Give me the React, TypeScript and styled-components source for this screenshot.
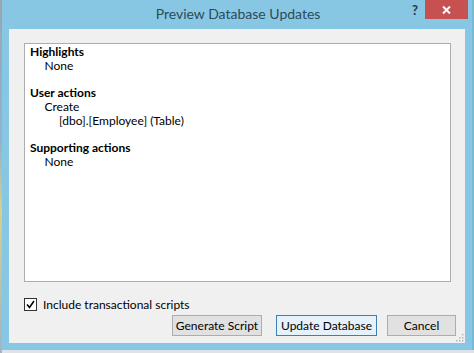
import React from 'react'
import styled, { createGlobalStyle } from 'styled-components'

const GlobalStyle = createGlobalStyle`
  html, body {
    margin: 0;
    padding: 0;
    background: #dfe3e6;
  }
  body {
    font-family: "Segoe UI", Lato, "Noto Sans", sans-serif;
  }
`

const Screen = styled.div`
  display: flex;
  width: 474px;
  height: 353px;
  overflow: hidden;
`

const Backdrop = styled.div`
  width: 2px;
  background: linear-gradient(#9aa6b2 0%, #8fb3d0 40%, #d6d08a 60%, #9fb4c6 100%);
`

const Window = styled.div`
  display: flex;
  flex-direction: column;
  width: 472px;
  height: 350px;
  background: #88c7e3;
  box-shadow: inset -2px 0 0 #79b8d6;
`

const TitleBar = styled.div`
  position: relative;
  display: flex;
  align-items: center;
  justify-content: center;
  height: 29px;
  flex-shrink: 0;
`

const Title = styled.div`
  font-size: 14px;
  color: #2c4a5a;
  margin-top: -2px;
`

const HelpButton = styled.div`
  position: absolute;
  left: 406px;
  top: 1px;
  width: 14px;
  height: 19px;
  font-size: 13px;
  font-weight: bold;
  color: #1f3a4a;
  text-align: center;
  line-height: 19px;
`

const CloseButton = styled.div`
  position: absolute;
  left: 423px;
  top: 0;
  width: 43px;
  height: 19px;
  background: #c75050;
  display: flex;
  align-items: center;
  justify-content: center;
`

const Client = styled.div`
  position: relative;
  flex: 1;
  display: flex;
  flex-direction: column;
  margin: 0 9px 7px 7px;
  padding: 14px 14px 0 15px;
  background: #f0f0f0;
`

const Panel = styled.div`
  height: 239px;
  box-sizing: border-box;
  border: 1px solid #adadad;
  background: #fff;
  padding: 1px 5px;
  font-size: 12px;
  line-height: 14px;
  color: #000;
`

const Section = styled.div`
  margin-bottom: 13px;
`

const Heading = styled.div`
  font-weight: bold;
`

const Item = styled.div<{ $level: number }>`
  padding-left: ${p => p.$level * 14.5}px;
  white-space: nowrap;
`

const CheckRow = styled.label`
  display: flex;
  align-items: center;
  gap: 6px;
  margin-top: 15px;
  font-size: 12px;
  color: #000;
`

const CheckBox = styled.span`
  width: 11px;
  height: 11px;
  border: 1px solid #333;
  background: #fff;
  display: flex;
  align-items: center;
  justify-content: center;
`

const ButtonRow = styled.div`
  display: flex;
  justify-content: flex-end;
  gap: 10px;
  margin: 3px -5px 0 0;
`

const Button = styled.div<{ $default?: boolean; $width: number; $space?: number }>`
  width: ${p => p.$width}px;
  height: 21px;
  margin-right: ${p => p.$space ?? 0}px;
  box-sizing: border-box;
  border: 1px solid ${p => (p.$default ? '#3c7fb1' : '#adadad')};
  background: ${p => (p.$default ? '#e5f1fb' : '#e1e1e1')};
  display: flex;
  align-items: center;
  justify-content: center;
  font-size: 12px;
  color: #000;
`

const Grip = styled.svg`
  position: absolute;
  right: 1px;
  bottom: 1px;
`

export default function App() {
  return (
    <>
      <GlobalStyle />
      <Screen>
        <Backdrop />
        <Window>
          <TitleBar>
            <Title>Preview Database Updates</Title>
            <HelpButton>?</HelpButton>
            <CloseButton>
              <svg width="9" height="8" viewBox="0 0 9 8">
                <path d="M1 0.5 L8 7.5 M8 0.5 L1 7.5" stroke="#fff" strokeWidth="2" />
              </svg>
            </CloseButton>
          </TitleBar>
          <Client>
            <Panel>
              <Section>
                <Heading>Highlights</Heading>
                <Item $level={1}>None</Item>
              </Section>
              <Section>
                <Heading>User actions</Heading>
                <Item $level={1}>Create</Item>
                <Item $level={2}>[dbo].[Employee] (Table)</Item>
              </Section>
              <Section>
                <Heading>Supporting actions</Heading>
                <Item $level={1}>None</Item>
              </Section>
            </Panel>
            <CheckRow>
              <CheckBox>
                <svg width="9" height="9" viewBox="0 0 9 9">
                  <path d="M1 4.5 L3.5 7.5 L8 1" fill="none" stroke="#000" strokeWidth="1.6" />
                </svg>
              </CheckBox>
              Include transactional scripts
            </CheckRow>
            <ButtonRow>
              <Button $width={90} $space={4}>Generate Script</Button>
              <Button $width={101} $default>Update Database</Button>
              <Button $width={69}>Cancel</Button>
            </ButtonRow>
            <Grip width="9" height="9" viewBox="0 0 9 9">
              {[
                [7, 1], [7, 4], [4, 4], [7, 7], [4, 7], [1, 7],
              ].map(([x, y]) => (
                <rect key={`${x}-${y}`} x={x} y={y} width="1.5" height="1.5" fill="#b8b8b8" />
              ))}
            </Grip>
          </Client>
        </Window>
      </Screen>
    </>
  )
}
